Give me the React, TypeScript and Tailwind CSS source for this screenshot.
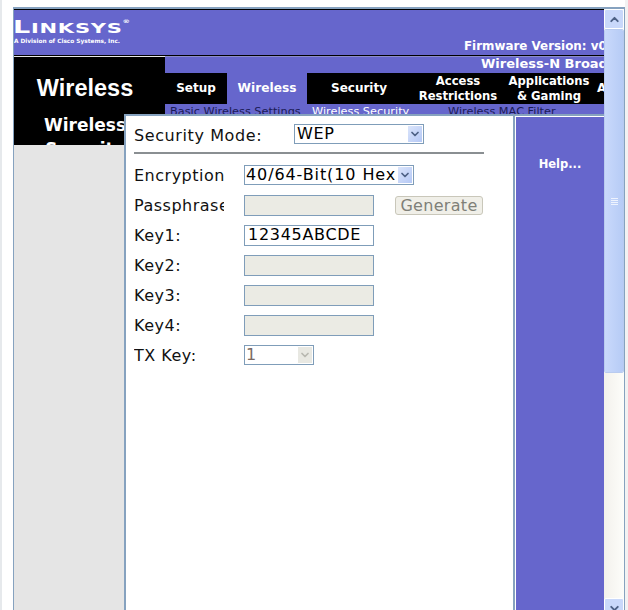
import { ChevronDown, ChevronUp } from 'lucide-react'

const sans = 'font-["DejaVu_Sans",sans-serif]'

function ArrowButton({ disabled }: { disabled?: boolean }) {
  return (
    <span
      className={`absolute right-px top-px bottom-px w-[16px] flex items-center justify-center rounded-[1px] border border-white pointer-events-none ${
        disabled ? 'bg-[#e8e8e2] text-[#b8b8b0]' : 'bg-gradient-to-br from-[#dbe5fb] to-[#b5c8f5] text-[#4d6185]'
      }`}
    >
      <ChevronDown size={12} strokeWidth={3.5} />
    </span>
  )
}

function Row({ label, children }: { label: string; children: React.ReactNode }) {
  return (
    <div className="flex items-center h-[30px]">
      <span className="w-[90px] mr-[20px] overflow-hidden whitespace-nowrap text-[16px] tracking-[0.5px] text-[#111]">{label}</span>
      <div className="flex items-center mb-[2px]">{children}</div>
    </div>
  )
}

function KeyInput({ value }: { value?: string }) {
  return (
    <input
      readOnly
      disabled={!value}
      value={value ?? ''}
      className="w-[130px] h-[21px] border border-[#7f9db9] px-[3px] text-[16px] tracking-[0.7px] text-black bg-white disabled:bg-[#ebebe4] outline-none"
    />
  )
}

function Tab({ children, active, className }: { children: React.ReactNode; active?: boolean; className: string }) {
  return (
    <div
      className={`shrink-0 flex items-center justify-center text-center text-white font-bold leading-[15px] ${
        active ? 'bg-[#6666cc]' : 'bg-black'
      } ${className}`}
    >
      {children}
    </div>
  )
}

export default function App() {
  return (
    <div className={`w-[628px] h-[610px] bg-white overflow-hidden pl-[11px] pt-[7px] border-l-2 border-[#e6e9ec] border-r-[3px] border-r-[#f2f2f2] ${sans}`}>
      <div className="h-[620px] w-[612px] flex border-l border-t-2 border-r-2 border-[#86a2bf] relative">
        {/* page */}
        <div className="w-[590px] shrink-0 h-full overflow-hidden flex flex-col bg-[#e5e5e5]">
          {/* header */}
          <div className="h-[47px] shrink-0 bg-[#6666cc] border-t border-b border-black relative text-white">
            <div className="absolute -left-px top-[8px] flex items-baseline font-bold leading-none tracking-[0.5px] scale-x-[1.5] origin-left">
              <span className="text-[18px]">L</span>
              <span className="text-[14px]">INKSYS</span>
              <span className="text-[5px] self-start mt-[1px]">®</span>
            </div>
            <div className="absolute left-0 top-[29px] text-[5.8px] font-bold leading-none whitespace-nowrap">
              A Division of Cisco Systems, Inc.
            </div>
            <div className="absolute left-[450px] top-[31px] text-[11.9px] font-bold leading-none whitespace-nowrap">
              Firmware Version: v0.93.9
            </div>
          </div>
          {/* nav */}
          <div className="h-[90px] shrink-0 flex">
            <div className="w-[151px] shrink-0 h-[88px] mt-px bg-black text-white font-bold text-center overflow-hidden pr-[9px]">
              <div className="font-['Liberation_Sans',sans-serif] text-[23.5px] leading-[26px] mt-[18px]">Wireless</div>
              <div className="text-[17px] leading-[24px] mt-[12px]">
                Wireless
                <br />
                Security
              </div>
            </div>
            <div className="flex-1 min-w-0 flex flex-col overflow-hidden border-t border-[#8d8dc9] bg-[#6666cc]">
              <div className="h-[16px] shrink-0 pl-[316px] text-white font-bold text-[13px] leading-[14px] whitespace-nowrap">
                Wireless-N Broadband Router
              </div>
              <div className="h-[31px] shrink-0 flex bg-black">
                <Tab className="w-[62px] text-[12px]">Setup</Tab>
                <Tab active className="w-[80px] text-[12.2px]">Wireless</Tab>
                <Tab className="w-[104px] text-[12px]">Security</Tab>
                <Tab className="w-[94px] text-[11.6px]">Access<br />Restrictions</Tab>
                <Tab className="w-[88px] text-[11.6px]">Applications<br />&amp; Gaming</Tab>
                <Tab className="w-[100px] !justify-start pl-[4px] text-[12px]">Administration</Tab>
              </div>
              <div className="h-[11px] shrink-0 relative overflow-hidden text-[11.3px] leading-[14px] whitespace-nowrap">
                <span className="absolute left-[5px] top-px text-[#1a1a55]">Basic Wireless Settings</span>
                <span className="absolute left-[147px] top-px text-white">Wireless Security</span>
                <span className="absolute left-[283px] top-px text-[#1a1a55]">Wireless MAC Filter</span>
              </div>
            </div>
          </div>
          <div className="flex-1" />
        </div>

        {/* dialog over the page */}
        <div className="absolute left-[110px] top-[105px] w-[480px] h-[515px] flex bg-white border-l-2 border-t-2 border-[#86a2bf]">
          <div className="w-[387px] shrink-0 pl-[8px] pr-[29px] pt-[5px]">
            <div className="flex items-center h-[30px]">
              <span className="w-[160px] text-[16px] tracking-[0.6px] text-[#111] whitespace-nowrap">Security Mode:</span>
              <div className="relative mb-[4px]">
                <select
                  defaultValue="WEP"
                  className="appearance-none w-[130px] h-[20px] block border border-[#7f9db9] bg-white pl-[2px] text-[16px] tracking-[0.7px] leading-[18px] text-black outline-none"
                >
                  <option>WEP</option>
                </select>
                <ArrowButton />
              </div>
            </div>
            <div className="h-[2px] bg-[#8a8f92] mt-px mb-[7px]" />
            <Row label="Encryption">
              <div className="relative">
                <select className="appearance-none w-[170px] h-[20px] block border border-[#7f9db9] bg-white pl-[1px] pr-[18px] text-[16px] tracking-[0.9px] leading-[18px] text-black outline-none overflow-hidden whitespace-nowrap">
                  <option>40/64-Bit(10 Hex digits)</option>
                </select>
                <ArrowButton />
              </div>
            </Row>
            <Row label="Passphrase">
              <KeyInput />
              <button
                disabled
                className="ml-[21px] w-[88px] h-[19px] pt-[2px] flex items-center justify-center border border-[#c9c7ba] rounded-[3px] bg-[#f0efe8] text-[16px] text-[#7f8078] tracking-[0.3px]"
              >
                Generate
              </button>
            </Row>
            <Row label="Key1:">
              <KeyInput value="12345ABCDE" />
            </Row>
            <Row label="Key2:">
              <KeyInput />
            </Row>
            <Row label="Key3:">
              <KeyInput />
            </Row>
            <Row label="Key4:">
              <KeyInput />
            </Row>
            <Row label="TX Key:">
              <div className="relative">
                <select
                  disabled
                  className="appearance-none w-[70px] h-[20px] block border border-[#7f9db9] bg-white pl-[1px] text-[16px] leading-[18px] text-[#7a6a62] outline-none opacity-100"
                >
                  <option>1</option>
                </select>
                <ArrowButton disabled />
              </div>
            </Row>
          </div>
          <div className="flex-1 border-l-2 border-[#86a2bf]">
            <div className="h-full border-l border-t border-white bg-[#6666cc] text-white font-bold text-[11.5px] text-center pt-[39px]">
              Help...
            </div>
          </div>
        </div>

        {/* scrollbar */}
        <div className="w-[20px] shrink-0 h-full flex flex-col bg-gradient-to-r from-[#f3f1ec] to-[#fdfdfa]">
          <div className="h-[20px] shrink-0 flex items-center justify-center rounded-[2px] border border-white bg-[#c9d8fa] text-[#4d6185]">
            <ChevronUp size={13} strokeWidth={3.5} />
          </div>
          <div className="h-[344px] shrink-0 rounded-[2px] border border-white outline outline-1 -outline-offset-1 outline-[#b9cbef] bg-gradient-to-r from-[#c9d9fb] to-[#b6cbf6] flex items-center justify-center">
            <div className="w-[7px] flex flex-col gap-px">
              <div className="h-px bg-[#eef3fe]" />
              <div className="h-px bg-[#eef3fe]" />
              <div className="h-px bg-[#eef3fe]" />
              <div className="h-px bg-[#eef3fe]" />
            </div>
          </div>
          <div className="h-[225px] shrink-0" />
          <div className="h-[20px] shrink-0 flex items-center justify-center rounded-[2px] border border-white bg-[#c9d8fa] text-[#4d6185]">
            <ChevronDown size={13} strokeWidth={3.5} />
          </div>
        </div>
      </div>
    </div>
  )
}
